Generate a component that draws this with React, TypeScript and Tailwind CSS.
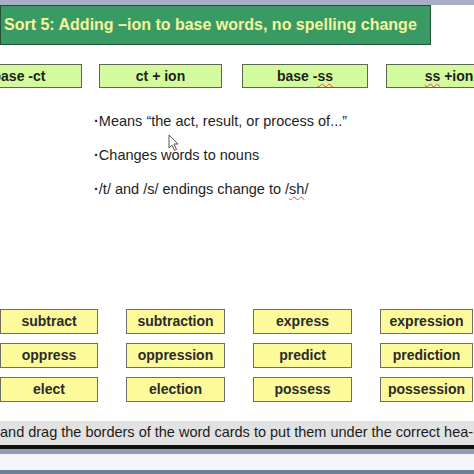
import React from "react";

const headers = [
    { label: "base -ct", cls: "ml-[-44px] w-[126px]", wavy: "", after: "" },
    { label: "ct + ion", cls: "ml-[17px] w-[123px]", wavy: "", after: "" },
    { label: "base -", cls: "ml-[20px] w-[126px]", wavy: "ss", after: "" },
    { label: "", cls: "ml-[18px] w-[126px]", wavy: "ss", after: " +ion" },
];

const words = [
    ["subtract", "subtraction", "express", "expression"],
    ["oppress", "oppression", "predict", "prediction"],
    ["elect", "election", "possess", "possession"],
];

function Wavy({ children }: { children: React.ReactNode }) {
    return (
        <span className="underline decoration-wavy decoration-[#e05050] decoration-1 underline-offset-2">
            {children}
        </span>
    );
}

export default function App() {
    return (
        <div
            className="relative w-[474px] h-[474px] overflow-hidden bg-white flex flex-col"
            style={{ fontFamily: '"Liberation Sans", Arial, sans-serif' }}
        >
            <div className="h-[5px] bg-[#a9b0c6]" />

            {/* slide title */}
            <div className="w-[431px] h-[40px] bg-[#3a9a64] border border-[#24503a] flex items-center pl-[3px]">
                <span className="text-[16px] font-bold text-[#f6f59c] whitespace-nowrap">
                    Sort 5: Adding –ion to base words, no spelling change
                </span>
            </div>

            {/* column headings */}
            <div className="flex mt-[19px] shrink-0">
                {headers.map((h, i) => (
                    <div
                        key={i}
                        className={`${h.cls} shrink-0 h-[24px] bg-[#d3fb9d] border border-[#5d6651] flex items-center justify-center text-[14px] font-bold text-[#1f1f1f] whitespace-pre`}
                    >
                        <span>
                            {h.label}
                            {h.wavy && <Wavy>{h.wavy}</Wavy>}
                            {h.after}
                        </span>
                    </div>
                ))}
            </div>

            {/* notes */}
            <div className="flex flex-col gap-[14px] mt-[23px] ml-[94px] text-[14.5px] leading-[20px] text-[#1e1e1e]">
                <p>
                    <span className="font-bold">·</span>Means “the act, result, or process of...”
                </p>
                <p>
                    <span className="font-bold">·</span>Changes words to nouns
                </p>
                <p>
                    <span className="font-bold">·</span>/t/ and /s/ endings change to /<Wavy>sh</Wavy>/
                </p>
            </div>

            {/* word cards */}
            <div className="grid grid-cols-[98px_99px_99px_93px] gap-x-[28px] gap-y-[9px] mt-[110px]">
                {words.flat().map((w) => (
                    <div
                        key={w}
                        className="h-[25px] bg-[#fdfa9c] border border-[#6e6e66] flex items-center justify-center text-[14px] font-bold text-[#2a2a2a]"
                    >
                        {w}
                    </div>
                ))}
            </div>

            {/* status line */}
            <div className="mt-[19px] h-[24px] bg-[#e2e2e2] flex items-center whitespace-nowrap text-[14.5px] text-[#1c1c1c]">
                and drag the borders of the word cards to put them under the correct hea-
            </div>
            <div className="h-[4px] bg-[#111]" />
            <div className="h-[5px] bg-[#919cb5]" />
            <div className="h-[16px] bg-[#f4f6f9]" />
            <div className="flex-1 bg-[#6f7d9c]" />

            {/* mouse pointer */}
            <svg
                className="absolute left-[168px] top-[134px]"
                width="12"
                height="18"
                viewBox="0 0 12 18"
            >
                <path
                    d="M1 1 L1 14 L4 11 L6.5 16.5 L8.5 15.5 L6 10 L10 10 Z"
                    fill="#fff"
                    stroke="#555"
                    strokeWidth="1"
                    strokeLinejoin="round"
                />
            </svg>
        </div>
    );
}
